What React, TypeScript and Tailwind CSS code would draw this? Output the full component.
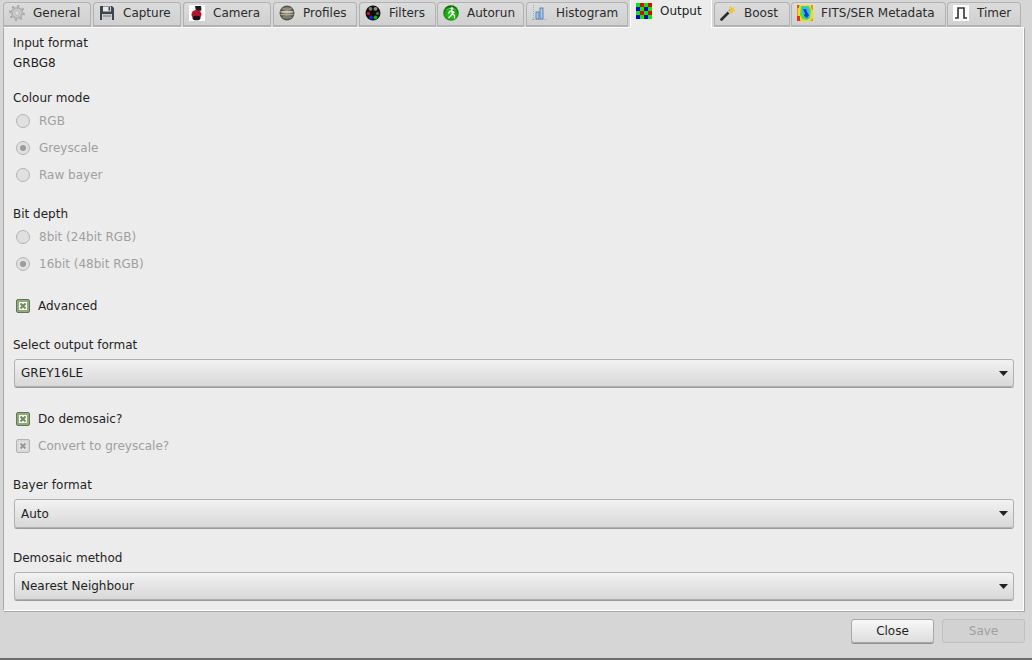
import React from 'react'

const font = "font-['DejaVu_Sans',sans-serif]"

function GearIcon() {
  return (
    <svg width="16" height="16" viewBox="0 0 16 16">
      <circle cx="8" cy="8" r="5" fill="none" stroke="#b5b5b5" strokeWidth="2.4" />
      <circle cx="8" cy="8" r="7" fill="none" stroke="#a8a8a8" strokeWidth="2" strokeDasharray="2.2 3.3" />
      <circle cx="8" cy="8" r="2.4" fill="#dcdcdc" stroke="#999" strokeWidth="0.6" />
    </svg>
  )
}

function SaveIcon() {
  return (
    <svg width="16" height="16" viewBox="0 0 16 16">
      <path d="M1 1h12l2 2v12H1z" fill="#3d4450" />
      <rect x="4" y="1.5" width="8" height="5" fill="#e8e8e8" />
      <rect x="9.5" y="2" width="1.6" height="3.6" fill="#3d4450" />
      <rect x="3" y="9" width="10" height="6" fill="#c9ccd0" />
      <rect x="4" y="10.5" width="8" height="1" fill="#777" />
    </svg>
  )
}

function CameraIcon() {
  return (
    <svg width="16" height="16" viewBox="0 0 16 16">
      <rect width="16" height="16" fill="#fff" />
      <path d="M6 1h6l.5 4.500-5.500 1z" fill="#1b1b1b" />
      <ellipse cx="7.500" cy="9.500" rx="5" ry="4.500" fill="#b3152a" />
      <ellipse cx="7.500" cy="13" rx="4" ry="2.300" fill="#1c1014" />
    </svg>
  )
}

function JupiterIcon() {
  return (
    <svg width="16" height="16" viewBox="0 0 16 16">
      <circle cx="8" cy="8" r="7.500" fill="#55544e" />
      <ellipse cx="8" cy="3.800" rx="5" ry="1.600" fill="#8f8d80" />
      <ellipse cx="8" cy="6.800" rx="6.800" ry="1.300" fill="#c9c5b0" />
      <ellipse cx="8" cy="9.500" rx="6.800" ry="1.200" fill="#b2a98e" />
      <ellipse cx="8" cy="12.300" rx="5" ry="1.400" fill="#827f70" />
    </svg>
  )
}

function FilterWheelIcon() {
  return (
    <svg width="16" height="16" viewBox="0 0 16 16">
      <circle cx="8" cy="8" r="7.500" fill="#0c0c0c" />
      <circle cx="5.500" cy="3.800" r="1.900" fill="#777" />
      <circle cx="10.500" cy="3.800" r="1.900" fill="#8a8a8a" />
      <circle cx="3.400" cy="8.500" r="1.800" fill="#c81414" />
      <circle cx="12.600" cy="8.500" r="1.800" fill="#555" />
      <circle cx="6" cy="12.500" r="1.900" fill="#1428d8" />
      <circle cx="10.500" cy="12.500" r="1.900" fill="#08b010" />
    </svg>
  )
}

function AutorunIcon() {
  return (
    <svg width="16" height="16" viewBox="0 0 16 16">
      <defs>
        <radialGradient id="runGlow" cx="0.5" cy="0.6" r="0.6">
          <stop offset="0" stopColor="#35d51f" />
          <stop offset="0.7" stopColor="#179a10" />
          <stop offset="1" stopColor="#0c5a0a" />
        </radialGradient>
      </defs>
      <circle cx="8" cy="8" r="7.800" fill="url(#runGlow)" />
      <path d="M2.500 5a6.500 4 0 0 1 11 0c-3-1.500-8-1.500-11 0z" fill="#a8e09c" />
      <circle cx="9" cy="3.600" r="1.300" fill="#fff" />
      <path d="M8.500 5.500l-2 1-1 2M8.500 5.500l1 3-2 2.500-2 2M9.500 8.500l2 2v3M9 6l2.500 1.500" fill="none" stroke="#fff" strokeWidth="1.300" />
    </svg>
  )
}

function HistogramIcon() {
  return (
    <svg width="16" height="16" viewBox="0 0 16 16">
      <path d="M1.500 0v15M0 14.500h15" stroke="#a9aeb4" strokeWidth="1" strokeDasharray="1 1" fill="none" />
      <rect x="4" y="7" width="3" height="7" fill="#a9c8e8" stroke="#3f78b5" strokeWidth="0.800" />
      <rect x="8" y="3" width="3" height="11" fill="#a9c8e8" stroke="#3f78b5" strokeWidth="0.800" />
    </svg>
  )
}

// 4x4 bayer grid for the Output tab
function BayerIcon() {
  const rows = [0, 1, 2, 3]
  return (
    <svg width="16" height="16" viewBox="0 0 16 16" shapeRendering="crispEdges">
      {rows.map(r =>
        rows.map(c => (
          <rect
            key={`${r}-${c}`}
            x={c * 4}
            y={r * 4}
            width="4"
            height="4"
            fill={r % 2 === 0 ? (c % 2 === 0 ? '#00f000' : '#f00000') : c % 2 === 0 ? '#0000d8' : '#00f000'}
          />
        ))
      )}
    </svg>
  )
}

function WandIcon() {
  return (
    <svg width="16" height="16" viewBox="0 0 16 16">
      <path d="M1.500 14.500L10 6" stroke="#2b2b2b" strokeWidth="2.600" strokeLinecap="round" />
      <path d="M8.500 7.500L10 6" stroke="#d8d8d8" strokeWidth="2.600" />
      <path d="M11 1l.8 2.200L14.500 2l-1 2.600L15.500 6l-2.600.6-.4 2.400-1.800-2-2.200.3 1.200-2.200L9 3z" fill="#f0c830" />
    </svg>
  )
}

function HeatmapIcon() {
  return (
    <svg width="16" height="16" viewBox="0 0 16 16">
      <rect width="16" height="16" fill="#f09010" />
      <path d="M3 0h11v3l2 3v7l-3 3H4L1 12V4z" fill="#e8e020" />
      <path d="M4 1h8l2 4-1 8-3 2-5-1-2-5z" fill="#50d860" />
      <path d="M5 2h6l1 4 1 6-3 2-3-2-2-5z" fill="#28c0e8" />
      <path d="M6 4h3l1 3 2 3-2 3-3-2 1-3z" fill="#1038c8" />
      <rect x="0" y="11" width="3" height="5" fill="#e83010" />
      <rect x="0" y="0" width="2" height="3" fill="#e85010" />
    </svg>
  )
}

function PulseIcon() {
  return (
    <svg width="16" height="16" viewBox="0 0 16 16">
      <rect width="16" height="16" fill="#fff" />
      <path d="M2 13h3V3h6v10h3" fill="none" stroke="#333" strokeWidth="1.600" />
    </svg>
  )
}

const tabs = [
  { label: 'General', w: 'w-[88px] mr-[2px]', icon: <GearIcon /> },
  { label: 'Capture', w: 'w-[88px] mr-[2px]', icon: <SaveIcon /> },
  { label: 'Camera', w: 'w-[88px] mr-[2px]', icon: <CameraIcon /> },
  { label: 'Profiles', w: 'w-[84px] mr-[2px]', icon: <JupiterIcon /> },
  { label: 'Filters', w: 'w-[77px] mr-[1px]', icon: <FilterWheelIcon /> },
  { label: 'Autorun', w: 'w-[87px] mr-[2px]', icon: <AutorunIcon /> },
  { label: 'Histogram', w: 'w-[102px] mr-[2px]', icon: <HistogramIcon /> },
  { label: 'Output', w: 'w-[82px] mr-[2px]', icon: <BayerIcon />, active: true },
  { label: 'Boost', w: 'w-[76px] mr-[1px]', icon: <WandIcon /> },
  { label: 'FITS/SER Metadata', w: 'w-[155px] mr-[1px]', icon: <HeatmapIcon /> },
  { label: 'Timer', w: 'w-[74px]', icon: <PulseIcon /> },
]

function Radio({ label, checked }: { label: string; checked?: boolean }) {
  return (
    <div className="h-[27px] flex items-center pl-[3px] gap-[9px] text-[#a0a0a0]">
      <span className="w-[14px] h-[14px] rounded-full border border-[#b4b4b4] bg-[#e0e0e0] flex items-center justify-center">
        {checked && <span className="w-[6px] h-[6px] rounded-full bg-[#9c9c9c]" />}
      </span>
      <span>{label}</span>
    </div>
  )
}

function Check({ label, disabled }: { label: string; disabled?: boolean }) {
  return (
    <div className={`h-[27px] flex items-center pl-[3px] gap-[8px] ${disabled ? 'text-[#a0a0a0]' : 'text-[#1f1f1f]'}`}>
      <span className={`w-[14px] h-[14px] rounded-[2px] border flex items-center justify-center ${disabled ? 'border-[#b4b4b4] bg-[#d8d8d8]' : 'border-[#66725c] bg-[#90ab78]'}`}>
        <span className={`w-[8px] h-[8px] flex items-center justify-center ${disabled ? 'bg-[#e4e4e4]' : 'bg-[#f6f6f6]'}`}>
          <svg width="6" height="6" viewBox="0 0 6 6">
            <path d="M0.500 0.500l5 5M5.500 0.500l-5 5" stroke={disabled ? '#989898' : '#6f8a5c'} strokeWidth="2" />
          </svg>
        </span>
      </span>
      <span>{label}</span>
    </div>
  )
}

function Select({ value, tall }: { value: string; tall?: boolean }) {
  return (
    <div className={`${tall ? 'h-[29px]' : 'h-[28px]'} ml-px flex items-center justify-between pl-[6px] pr-[5px] rounded-[3px] border border-[#b0b0b0] bg-gradient-to-b from-[#f2f2f2] to-[#d8d8d8] shadow-[0_1px_0_#9a9a9a]`}>
      <span className="text-[#1f1f1f]">{value}</span>
      <svg width="9" height="5" viewBox="0 0 9 5">
        <path d="M0 0h9L4.500 5z" fill="#222" />
      </svg>
    </div>
  )
}

export default function App() {
  return (
    <div className={`w-[1032px] h-[660px] overflow-hidden bg-[#d6d6d6] flex flex-col text-[12px] leading-[16px] text-[#1f1f1f] ${font}`}>
      <div className="h-[27px] pl-[3px] flex items-start relative z-10">
        {tabs.map(t => (
          <div
            key={t.label}
            className={`${t.w} shrink-0 flex items-center gap-[8px] pl-[5px] border-x ${
              t.active
                ? 'h-[28px] pb-[6px] bg-[#ececec] border-x-white text-[#1f1f1f]'
                : 'h-[25px] mt-[2px] pb-[3px] rounded-t-[4px] border-t border-b-2 bg-gradient-to-b from-[#dcdcdc] to-[#d0d0d0] border-[#b2b2b2] text-[#2b2b2b]'
            }`}
          >
            <span className="shrink-0 w-[16px] h-[16px]">{t.icon}</span>
            <span>{t.label}</span>
          </div>
        ))}
      </div>

      <div className="mx-[3px] w-[1021px] h-[584px] bg-[#ececec] border border-white border-l-[#a8a8a8] shadow-[1px_1px_0_#a8a8a8] pt-[7px] pl-[9px] pr-[9px] flex flex-col">
        <div>Input format</div>
        <div className="mt-[4px]">GRBG8</div>

        <div className="mt-[19px]">Colour mode</div>
        <div className="mt-[1px]">
          <Radio label="RGB" />
          <Radio label="Greyscale" checked />
          <Radio label="Raw bayer" />
        </div>

        <div className="mt-[18px]">Bit depth</div>
        <div className="mt-[1px]">
          <Radio label="8bit (24bit RGB)" />
          <Radio label="16bit (48bit RGB)" checked />
        </div>

        <div className="mt-[15px]">
          <Check label="Advanced" />
        </div>

        <div className="mt-[18px]">Select output format</div>
        <div className="mt-[6px]">
          <Select value="GREY16LE" />
        </div>

        <div className="mt-[18px]">
          <Check label="Do demosaic?" />
          <Check label="Convert to greyscale?" disabled />
        </div>

        <div className="mt-[18px]">Bayer format</div>
        <div className="mt-[6px]">
          <Select value="Auto" tall />
        </div>

        <div className="mt-[22px]">Demosaic method</div>
        <div className="mt-[6px]">
          <Select value="Nearest Neighbour" />
        </div>
      </div>

      <div className="flex justify-end gap-[8px] pt-[8px] pr-[7px]">
        <button className="w-[83px] h-[24px] rounded-[3px] border border-[#a8a8a8] bg-gradient-to-b from-[#f8f8f8] to-[#dedede] text-[#1f1f1f] shadow-[0_1px_0_#8f8f8f]">
          Close
        </button>
        <button className="w-[83px] h-[24px] rounded-[3px] border border-[#c0c0c0] bg-[#d2d2d2] text-[#a0a0a0]">
          Save
        </button>
      </div>
      <div className="mt-auto h-[2px] bg-[#6e6e6e]" />
    </div>
  )
}
